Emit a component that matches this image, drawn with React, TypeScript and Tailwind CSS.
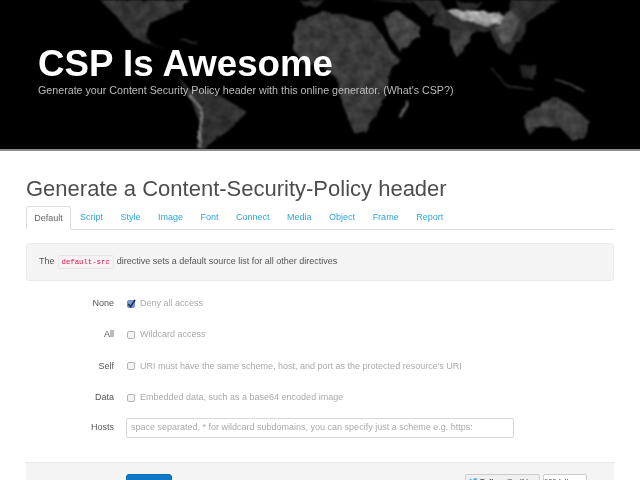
const LS = "font-['Liberation_Sans',Arial,sans-serif]";
const tabs = ["Script", "Style", "Image", "Font", "Connect", "Media", "Object", "Frame", "Report"];
const rows = [
  { label: "None", text: "Deny all access", checked: true },
  { label: "All", text: "Wildcard access", checked: false },
  { label: "Self", text: "URI must have the same scheme, host, and port as the protected resource's URI", checked: false },
  { label: "Data", text: "Embedded data, such as a base64 encoded image", checked: false },
];

function WorldMap() {
  return (
    <svg className="absolute inset-0 w-full h-full" viewBox="0 0 640 150" preserveAspectRatio="none">
      <defs>
        <filter id="soft" x="0" y="0" width="640" height="150" filterUnits="userSpaceOnUse" colorInterpolationFilters="sRGB">
          <feTurbulence type="fractalNoise" baseFrequency="0.1" numOctaves="2" seed="7" result="n" />
          <feDisplacementMap in="SourceGraphic" in2="n" scale="5" result="d" />
          <feGaussianBlur in="d" stdDeviation="1.2" result="b" />
          <feColorMatrix in="n" type="matrix" values="1 0 0 0 0 1 0 0 0 0 1 0 0 0 0 0 0 0 0 1" result="g" />
          <feComposite in="b" in2="g" operator="arithmetic" k1="0.8" k2="0.6" k3="0" k4="0" result="t" />
          <feGaussianBlur in="t" stdDeviation="0.6" />
        </filter>
      </defs>
      <g filter="url(#soft)">
        {/* North and Central America */}
        <path d="M100 0L190 0L177 13L150 23L146 37L153 45L167 50L150 45L133 37L117 17Z" fill="#343434" />
        <path d="M180 40L197 43" stroke="#2c2c2c" strokeWidth="2" fill="none" />
        {/* South America */}
        <path d="M178 77L190 90L210 90L247 113L230 130L203 150L197 150L200 123L190 100Z" fill="#303030" />
        <path d="M190 97L202 110L199 148" stroke="#7a7a7a" strokeWidth="3" fill="none" />
        {/* Europe and north Africa edge */}
        <path d="M370 0L415 3L430 18L445 10L440 0Z" fill="#2c2c2c" />
        <path d="M300 0L325 0L316 6L304 6Z" fill="#282828" />
        {/* Africa */}
        <path d="M293 33L300 20L323 12L343 15L373 23L383 37L392 53L400 60L392 68L388 77L386 97L375 117L367 132L355 135L348 120L342 103L337 80L323 67L303 63L293 50Z" fill="#3a3a3a" />
        {/* Arabia */}
        <path d="M383 17L397 10L420 27L420 37L400 52L390 37Z" fill="#444" />
        {/* Madagascar */}
        <path d="M407 100L398 118L402 118L408 107Z" fill="#5a5a5a" />
        {/* Asia */}
        <path d="M440 8L447 10L500 13L507 20L512 0L560 0L548 8L530 20L520 40L510 55L498 48L490 30L470 34L450 30L432 25Z" fill="#2e2e2e" />
        <path d="M450 30L473 33L470 40L457 58L450 43Z" fill="#3c3c3c" />
        <path d="M447 10L467 10L500 13L507 20L490 27L473 23L457 18Z" fill="#a0a0a0" />
        <path d="M457 2L483 2L476 9L459 9Z" fill="#2c2c2c" />
        <path d="M495 30L510 10L520 20L512 40L503 45Z" fill="#505050" />
        {/* Indonesia */}
        <path d="M490 67L507 87L533 90" stroke="#4a4a4a" strokeWidth="1" fill="none" />
        <path d="M555 80L570 84L584 92" stroke="#6a6a6a" strokeWidth="1.200" fill="none" />
        <path d="M520 67L537 65L534 80L522 78Z" fill="#242424" />
        {/* Australia */}
        <path d="M523 117L543 103L557 98L573 107L590 123L583 138L573 142L560 128L540 127L528 135Z" fill="#3e3e3e" />
      </g>
    </svg>
  );
}

export default function App() {
  return (
    <div className={`${LS} w-[640px] h-[480px] overflow-hidden bg-white blur-[0.35px]`}>
      <header className="relative h-[151px] bg-black border-b-2 border-[#8c8c8c] overflow-hidden">
        <WorldMap />
        <div className="relative pl-[38px] pt-[42px]">
          <h1 className="text-[36.7px] leading-[44px] font-bold text-white">CSP Is Awesome</h1>
          <p className="text-[10.7px] leading-[14px] text-[#bbb] -mt-[3px]">
            Generate your Content Security Policy header with this online generator. (What's CSP?)
          </p>
        </div>
      </header>

      <main className="mx-[26px] pt-[24px]">
        <h2 className="text-[22px] leading-[28px] text-[#4d4d4d]">Generate a Content-Security-Policy header</h2>

        <nav className="flex items-end h-[24px] mt-[3px] border-b border-[#ddd] text-[9px] leading-[11px] text-[#2fa4dc]">
          <span className="relative top-px w-[45px] h-[24px] flex items-center justify-center bg-white border border-[#ddd] border-b-white rounded-t-[3px] text-[#666]">
            Default
          </span>
          <div className="flex gap-[17.5px] h-[23px] items-center pl-[9px]">
            {tabs.map((t) => (
              <span key={t}>{t}</span>
            ))}
          </div>
        </nav>

        <section className="flex items-center gap-[2px] h-[38px] mt-[13px] pl-[12px] bg-[#f4f4f4] border border-[#eaeaea] rounded-[3px] text-[9px] text-[#555]">
          <span>The</span>
          <code className="mx-[1px] px-[3px] font-['Liberation_Mono',monospace] text-[7.3px] leading-[12px] text-[#dd1144] bg-[#f9f2f4] border border-[#e6e6e6] rounded-[2px]">
            default-src
          </code>
          <span>directive sets a default source list for all other directives</span>
        </section>

        <form className="mt-[7px] flex flex-col">
          {rows.map((r) => (
            <div key={r.label} className="flex items-center h-[31.4px]">
              <label className="w-[88px] text-right text-[9px] text-[#555]">{r.label}</label>
              <span
                className={`ml-[13px] w-[8px] h-[8px] rounded-[2px] border flex items-center justify-center ${
                  r.checked ? "bg-[#7a9fd8] border-[#6d8fc4]" : "bg-[#f5f5f5] border-[#b4b4b4]"
                }`}
              >
                {r.checked && (
                  <svg viewBox="0 0 10 10" className="w-[9px] h-[9px] shrink-0 overflow-visible">
                    <path d="M1.5 5.5L4 8.500L9 1" fill="none" stroke="#1c2c50" strokeWidth="1.800" />
                  </svg>
                )}
              </span>
              <span className="ml-[5px] text-[9px] text-[#aaa]">{r.text}</span>
            </div>
          ))}
          <div className="flex items-center mt-[4px]">
            <label className="w-[88px] text-right text-[9px] text-[#555]">Hosts</label>
            <div className="ml-[12px] w-[388px] h-[20px] flex items-center pl-[4px] border border-[#d8d8d8] rounded-[2px] text-[9px] text-[#aaa]">
              space separated, * for wildcard subdomains, you can specify just a scheme e.g. https:
            </div>
          </div>
        </form>

        <footer className="relative mt-[24px] h-[40px] bg-[#f4f4f4] border-t border-[#e6e6e6] pl-[100px] pt-[11px]">
          <div className="w-[46px] h-[30px] rounded-[3px] bg-[#0f79c9] border border-[#0d6cb6]" />
          <div className="absolute right-[27px] top-[11px] flex gap-[3px] text-[7.5px] leading-[11px] text-[#444]">
            <span className="flex items-start gap-[2px] w-[75px] h-[18px] pt-[1px] px-[3px] bg-[#f0f0f0] border border-[#ccc] rounded-[2px] font-bold whitespace-nowrap overflow-hidden">
              <svg viewBox="0 0 24 24" className="w-[9px] h-[9px] shrink-0 mt-[1px]" fill="#55acee">
                <path d="M23 5a9 9 0 0 1-2.6.7A4.5 4.5 0 0 0 22.400 3a9 9 0 0 1-2.900 1.100 4.500 4.500 0 0 0-7.700 4.100A12.800 12.800 0 0 1 2.500 3.500a4.500 4.500 0 0 0 1.400 6 4.500 4.500 0 0 1-2-.6 4.500 4.500 0 0 0 3.600 4.500 4.500 4.500 0 0 1-2 .1 4.500 4.500 0 0 0 4.200 3.100A9 9 0 0 1 1 18.500 12.800 12.800 0 0 0 20.700 7.100 9 9 0 0 0 23 5z" />
              </svg>
              Follow @mikispag
            </span>
            <span className="w-[44px] h-[18px] pt-[1px] text-center bg-white border border-[#ccc] rounded-[2px] whitespace-nowrap overflow-hidden">600 followers</span>
          </div>
        </footer>
      </main>
    </div>
  );
}
